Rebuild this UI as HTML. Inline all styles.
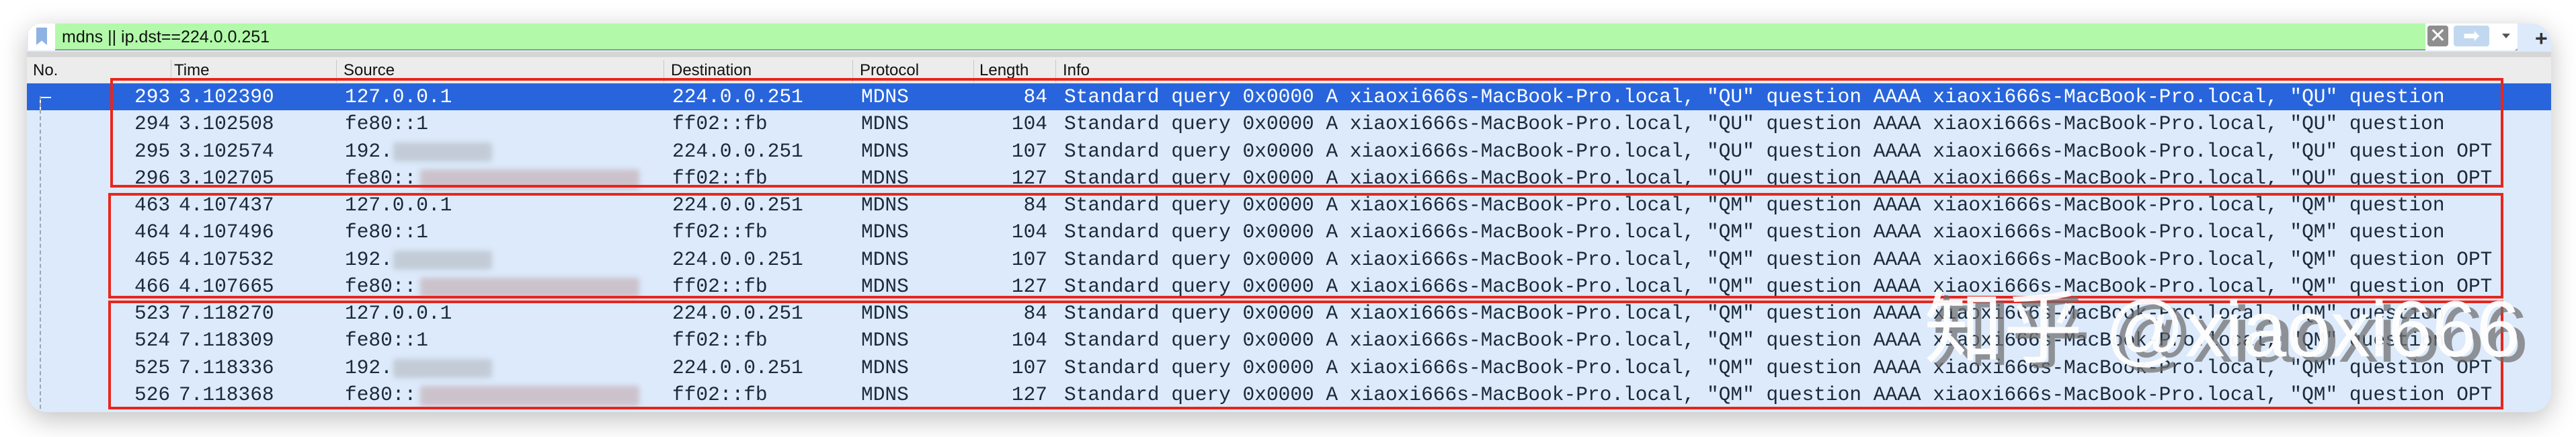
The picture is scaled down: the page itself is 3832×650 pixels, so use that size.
<!DOCTYPE html>
<html><head><meta charset="utf-8"><style>
*{margin:0;padding:0;box-sizing:border-box}
body{width:3832px;height:650px;background:#fff;position:relative;overflow:hidden;font-family:"Liberation Sans",sans-serif}
.win{position:absolute;left:40px;top:35px;width:3755px;height:578px;background:#dceafb;border-radius:22px 30px 30px 30px;box-shadow:0 10px 40px rgba(0,0,0,.25);overflow:hidden}
.fb{position:absolute;left:2px;top:0;width:3703px;height:40px;background:#b2f9aa;border-bottom:2px solid #9a9a9a}
.fbl{position:absolute;left:0;top:0;width:40px;height:40px;background:#fff}
.bm{position:absolute;left:12px;top:6px;width:16px;height:26px;background:#8fb2e2;clip-path:polygon(0 0,100% 0,100% 100%,50% 75%,0 100%)}
.ft{position:absolute;left:50px;top:0;line-height:40px;font-size:25px;color:#111}
.fr{position:absolute;left:3568px;top:0;width:137px;height:40px;background:#fff;border-radius:0 0 6px 0}
.xb{position:absolute;left:3px;top:3px;width:31px;height:31px;background:#8e8e8e;border-radius:4px;color:#fff;font-size:30px;line-height:31px;text-align:center}
.ab{position:absolute;left:42px;top:3px;width:53px;height:31px;background:#c2d8f0;border-radius:4px;color:#fff;font-size:30px;line-height:31px;text-align:center}
.dd{position:absolute;left:114px;top:15px;border-left:6px solid transparent;border-right:6px solid transparent;border-top:7px solid #555}
.plus{position:absolute;left:3731px;top:2px;font-size:32px;font-weight:bold;color:#333;line-height:40px}
.band{position:absolute;left:0;top:42px;width:100%;height:8px;background:#d6d6d6}
.hd{position:absolute;left:0;top:50px;width:100%;height:38px;background:#ececec;font-size:24px;color:#111}
.hd span{position:absolute;top:0;line-height:40px}
.hd i{position:absolute;top:4px;width:1px;height:34px;background:#c8c8c8}
.rows{position:absolute;left:0;top:89px;width:100%}
.r{position:relative;height:40.25px;font-family:"Liberation Mono","DejaVu Sans Mono",monospace;font-size:29.5px;color:#1a2a3a;line-height:40px;white-space:pre}
.r.sel{background:#2865dc;color:#fff}
.r span{position:absolute;top:0}
.no{left:160px;width:43px;text-align:right}
.tm{left:226px}.src{left:473px}.dst{left:960px}.pr{left:1241px}
.ln{left:1440px;width:78px;text-align:right}
.inf{left:1543px}
.blur{position:absolute;top:7px;height:28px;background:#c2cbd6;filter:blur(4px);border-radius:4px}
.blur.p{background:#cbc2cc;height:30px}
.box{position:absolute;border:4px solid #e8261c}
.tree{position:absolute;left:19px;top:108px;width:0;height:465px;border-left:2px dashed #9aa6b2}
.wm{position:absolute;left:2862px;top:430px;font-size:118px;color:#fff;font-family:"Liberation Sans","Noto Sans CJK SC",sans-serif;line-height:120px;text-shadow:12px 8px 0 rgba(110,110,110,.75);opacity:.95;white-space:nowrap}
</style></head><body>
<div class="win">
 <div class="fb"><div class="fbl"><div class="bm"></div></div><div class="ft">mdns || ip.dst==224.0.0.251</div></div>
 <div class="fr"><div class="xb">✕</div><div class="ab">➡</div><div class="dd"></div></div>
 <div class="plus">+</div>
 <div class="band"></div>
 <div class="hd">
  <span style="left:9px">No.</span><i style="left:214px"></i>
  <span style="left:219px">Time</span><i style="left:460px"></i>
  <span style="left:471px">Source</span><i style="left:947px"></i>
  <span style="left:958px">Destination</span><i style="left:1228px"></i>
  <span style="left:1239px">Protocol</span><i style="left:1408px"></i>
  <span style="left:1417px">Length</span><i style="left:1530px"></i>
  <span style="left:1541px">Info</span>
 </div>
 <div class="rows">
  <div class="r sel"><span class="no">293</span><span class="tm">3.102390</span><span class="src">127.0.0.1</span><span class="dst">224.0.0.251</span><span class="pr">MDNS</span><span class="ln">84</span><span class="inf">Standard query 0x0000 A xiaoxi666s-MacBook-Pro.local, "QU" question AAAA xiaoxi666s-MacBook-Pro.local, "QU" question</span><div style="position:absolute;left:19px;top:20px;width:17px;height:2px;background:#fff"></div><div style="position:absolute;left:19px;top:20px;width:2px;height:21px;background:#fff"></div></div>
  <div class="r"><span class="no">294</span><span class="tm">3.102508</span><span class="src">fe80::1</span><span class="dst">ff02::fb</span><span class="pr">MDNS</span><span class="ln">104</span><span class="inf">Standard query 0x0000 A xiaoxi666s-MacBook-Pro.local, "QU" question AAAA xiaoxi666s-MacBook-Pro.local, "QU" question</span></div>
  <div class="r"><span class="no">295</span><span class="tm">3.102574</span><span class="src">192.</span><div class="blur" style="left:545px;width:147px"></div><span class="dst">224.0.0.251</span><span class="pr">MDNS</span><span class="ln">107</span><span class="inf">Standard query 0x0000 A xiaoxi666s-MacBook-Pro.local, "QU" question AAAA xiaoxi666s-MacBook-Pro.local, "QU" question OPT</span></div>
  <div class="r"><span class="no">296</span><span class="tm">3.102705</span><span class="src">fe80::</span><div class="blur p" style="left:585px;width:326px"></div><span class="dst">ff02::fb</span><span class="pr">MDNS</span><span class="ln">127</span><span class="inf">Standard query 0x0000 A xiaoxi666s-MacBook-Pro.local, "QU" question AAAA xiaoxi666s-MacBook-Pro.local, "QU" question OPT</span></div>
  <div class="r"><span class="no">463</span><span class="tm">4.107437</span><span class="src">127.0.0.1</span><span class="dst">224.0.0.251</span><span class="pr">MDNS</span><span class="ln">84</span><span class="inf">Standard query 0x0000 A xiaoxi666s-MacBook-Pro.local, "QM" question AAAA xiaoxi666s-MacBook-Pro.local, "QM" question</span></div>
  <div class="r"><span class="no">464</span><span class="tm">4.107496</span><span class="src">fe80::1</span><span class="dst">ff02::fb</span><span class="pr">MDNS</span><span class="ln">104</span><span class="inf">Standard query 0x0000 A xiaoxi666s-MacBook-Pro.local, "QM" question AAAA xiaoxi666s-MacBook-Pro.local, "QM" question</span></div>
  <div class="r"><span class="no">465</span><span class="tm">4.107532</span><span class="src">192.</span><div class="blur" style="left:545px;width:147px"></div><span class="dst">224.0.0.251</span><span class="pr">MDNS</span><span class="ln">107</span><span class="inf">Standard query 0x0000 A xiaoxi666s-MacBook-Pro.local, "QM" question AAAA xiaoxi666s-MacBook-Pro.local, "QM" question OPT</span></div>
  <div class="r"><span class="no">466</span><span class="tm">4.107665</span><span class="src">fe80::</span><div class="blur p" style="left:585px;width:326px"></div><span class="dst">ff02::fb</span><span class="pr">MDNS</span><span class="ln">127</span><span class="inf">Standard query 0x0000 A xiaoxi666s-MacBook-Pro.local, "QM" question AAAA xiaoxi666s-MacBook-Pro.local, "QM" question OPT</span></div>
  <div class="r"><span class="no">523</span><span class="tm">7.118270</span><span class="src">127.0.0.1</span><span class="dst">224.0.0.251</span><span class="pr">MDNS</span><span class="ln">84</span><span class="inf">Standard query 0x0000 A xiaoxi666s-MacBook-Pro.local, "QM" question AAAA xiaoxi666s-MacBook-Pro.local, "QM" question</span></div>
  <div class="r"><span class="no">524</span><span class="tm">7.118309</span><span class="src">fe80::1</span><span class="dst">ff02::fb</span><span class="pr">MDNS</span><span class="ln">104</span><span class="inf">Standard query 0x0000 A xiaoxi666s-MacBook-Pro.local, "QM" question AAAA xiaoxi666s-MacBook-Pro.local, "QM" question</span></div>
  <div class="r"><span class="no">525</span><span class="tm">7.118336</span><span class="src">192.</span><div class="blur" style="left:545px;width:147px"></div><span class="dst">224.0.0.251</span><span class="pr">MDNS</span><span class="ln">107</span><span class="inf">Standard query 0x0000 A xiaoxi666s-MacBook-Pro.local, "QM" question AAAA xiaoxi666s-MacBook-Pro.local, "QM" question OPT</span></div>
  <div class="r"><span class="no">526</span><span class="tm">7.118368</span><span class="src">fe80::</span><div class="blur p" style="left:585px;width:326px"></div><span class="dst">ff02::fb</span><span class="pr">MDNS</span><span class="ln">127</span><span class="inf">Standard query 0x0000 A xiaoxi666s-MacBook-Pro.local, "QM" question AAAA xiaoxi666s-MacBook-Pro.local, "QM" question OPT</span></div>
 </div>
 <div class="tree"></div>
</div>
<div class="box" style="left:164px;top:116px;width:3560px;height:163px"></div>
<div class="box" style="left:161px;top:287px;width:3563px;height:157px"></div>
<div class="box" style="left:161px;top:447px;width:3563px;height:162px"></div>
<div class="wm">知乎 @xiaoxi666</div>
</body></html>
